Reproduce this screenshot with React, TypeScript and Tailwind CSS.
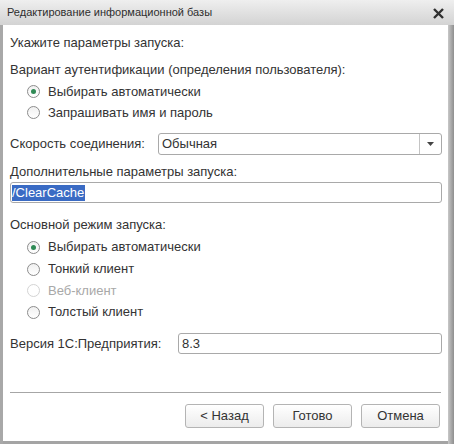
import React from "react";

function Radio({ checked, disabled, label }: { checked?: boolean; disabled?: boolean; label: string }) {
  return (
    <div className="flex items-center h-full">
      <div className="w-[17px]" />
      <div
        className={
          "w-[13px] h-[13px] rounded-full border flex items-center justify-center " +
          (disabled
            ? "border-[#d4d4d4] bg-white"
            : "border-[#8c8c8c] bg-gradient-to-b from-[#f0f0f0] to-white")
        }
      >
        {checked && <div className="w-[5px] h-[5px] rounded-full bg-[#2f8a55]" />}
      </div>
      <span className={"ml-[8px] " + (disabled ? "text-[#a8a8a8]" : "text-[#333]")}>{label}</span>
    </div>
  );
}

export default function App() {
  return (
    <div
      className="w-[454px] h-[444px] flex flex-col bg-[#a4a4a4] text-[13px] text-[#333] overflow-hidden"
      style={{ fontFamily: '"Liberation Sans", Arial, sans-serif' }}
    >
      <div className="h-[25px] flex items-center bg-gradient-to-b from-[#efefef] to-[#d3d3d3] pl-[7px] pr-[10px] shrink-0">
        <span className="text-[11px] text-[#2e2e2e] flex-1">Редактирование информационной базы</span>
        <svg width="11" height="11" viewBox="0 0 11 11" className="mt-[2px]">
          <path d="M1 1 L10 10 M10 1 L1 10" stroke="#303030" strokeWidth="2.4" />
        </svg>
      </div>
      <div className="flex flex-1 min-h-0">
        <div className="w-[3px] bg-[#a8a8a8]" />
        <div className="flex-1 bg-white flex flex-col pl-[7px] pr-[6px] mb-[3px]">
          <div className="mt-[7px] h-[22px] flex items-center">Укажите параметры запуска:</div>
          <div className="mt-[5px] h-[22px] flex items-center">Вариант аутентификации (определения пользователя):</div>
          <div className="h-[21px]"><Radio checked label="Выбирать автоматически" /></div>
          <div className="h-[21px]"><Radio label="Запрашивать имя и пароль" /></div>
          <div className="mt-[10px] h-[22px] flex items-center">
            <span className="w-[148px]">Скорость соединения:</span>
            <div className="flex-1 h-[22px] border border-[#a9a9a9] rounded-[3px] flex items-center">
              <span className="flex-1 pl-[3px]">Обычная</span>
              <div className="w-[22px] h-full border-l border-[#c4c4c4] flex items-center justify-center">
                <svg width="7" height="4" viewBox="0 0 7 4">
                  <path d="M0 0 L7 0 L3.5 4 Z" fill="#444" />
                </svg>
              </div>
            </div>
          </div>
          <div className="mt-[7px] h-[20px] flex items-center">Дополнительные параметры запуска:</div>
          <div className="h-[21px] border border-[#a9a9a9] rounded-[3px] flex items-center pl-[1px]">
            <span className="bg-[#3a6bc4] text-white leading-[16px] pr-[1px]">/ClearCache</span>
          </div>
          <div className="mt-[11px] h-[22px] flex items-center">Основной режим запуска:</div>
          <div className="h-[22px]"><Radio checked label="Выбирать автоматически" /></div>
          <div className="h-[22px]"><Radio label="Тонкий клиент" /></div>
          <div className="h-[21px]"><Radio disabled label="Веб-клиент" /></div>
          <div className="h-[22px]"><Radio label="Толстый клиент" /></div>
          <div className="mt-[10px] h-[21px] flex items-center">
            <span className="w-[168px]">Версия 1С:Предприятия:</span>
            <div className="flex-1 h-[21px] border border-[#a9a9a9] rounded-[3px] flex items-center pl-[3px]">8.3</div>
          </div>
          <div className="mt-[38px] h-px bg-[#a6a6a6] mr-[1px]" />
          <div className="mt-[11px] h-[24px] flex justify-end gap-[9px] pr-[2px]">
            {["< Назад", "Готово", "Отмена"].map((t) => (
              <div
                key={t}
                className="w-[79px] h-[24px] border border-[#b4b4b4] rounded-[3px] bg-gradient-to-b from-white to-[#ececec] flex items-center justify-center text-[13px]"
              >
                {t}
              </div>
            ))}
          </div>
        </div>
        <div className="w-[6px] bg-gradient-to-r from-[#c8c8c8] to-[#8f8f8f]" />
      </div>
    </div>
  );
}
